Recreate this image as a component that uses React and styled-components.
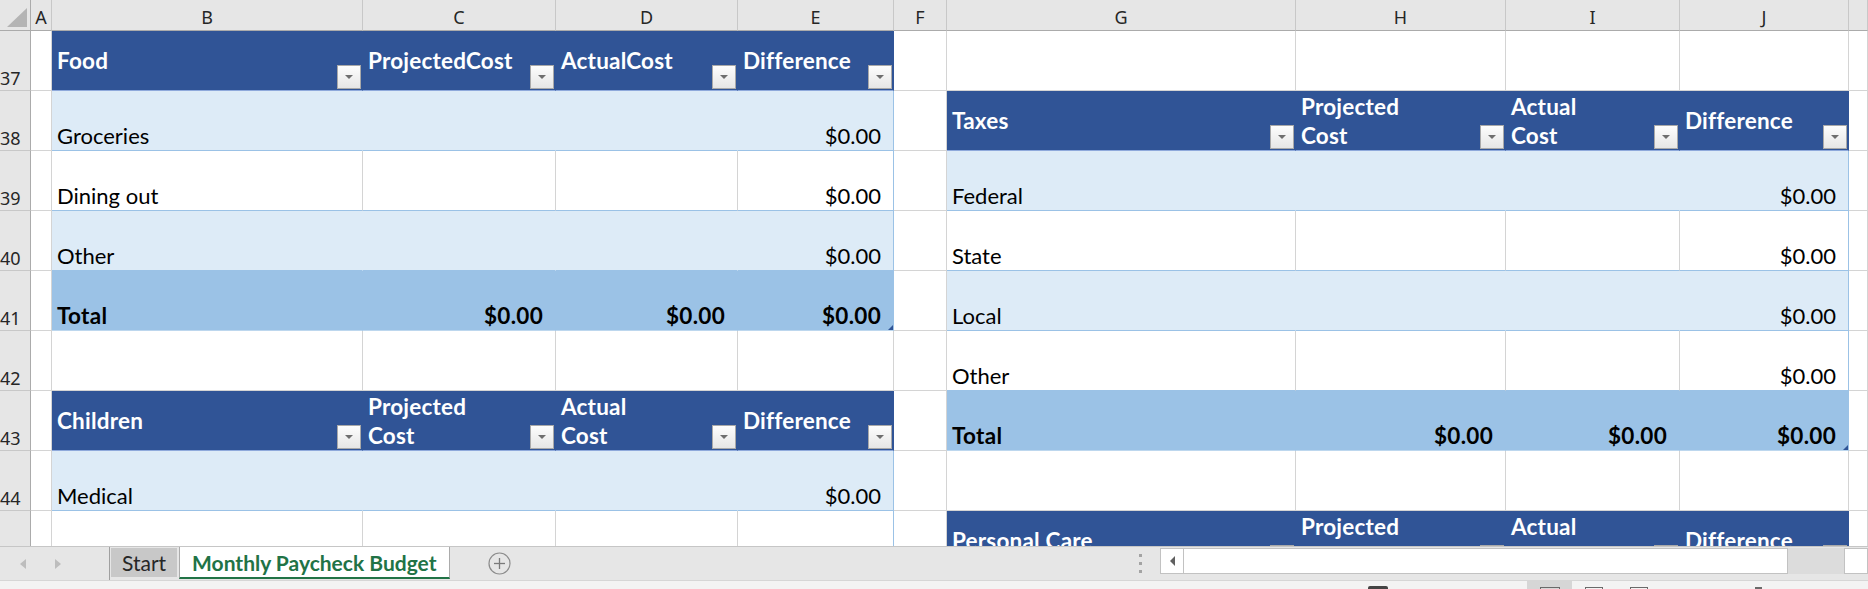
import React from "react";
import styled, { createGlobalStyle } from "styled-components";

const GlobalStyle = createGlobalStyle`
  html, body {
    margin: 0;
    padding: 0;
    background: #fff;
    overflow: hidden;
  }
  body {
    font-family: Lato, "Liberation Sans", sans-serif;
  }
`;

const COLS = [31, 21, 311, 193, 182, 156, 53, 349, 210, 174, 169];
const LETTERS = ["A", "B", "C", "D", "E", "F", "G", "H", "I", "J", ""];

const palette = {
  plain: { bg: "#ffffff", right: "#d4d4d4", bottom: "#d4d4d4" },
  head: { bg: "#305496", right: "#305496", bottom: "#8ea9db" },
  band: { bg: "#ddebf7", right: "#ddebf7", bottom: "#9bc2e6" },
  white: { bg: "#ffffff", right: "#d4d4d4", bottom: "#9bc2e6" },
  total: { bg: "#9bc2e6", right: "#9bc2e6", bottom: "#bdd7ee" },
};

const FOOD_HEAD = ["Food", "ProjectedCost", "ActualCost", "Difference"];
const splitHead = (first) => [first, "Projected\nCost", "Actual\nCost", "Difference"];
const head = (labels) => labels.map((text) => ({ kind: "head", text }));
const line = (kind, label, amounts = ["", "", "$0.00"]) => [
  { kind, text: label },
  ...amounts.map((text) => ({ kind, text, right: true })),
];
const plain4 = [0, 1, 2, 3].map(() => ({ kind: "plain" }));
const totals = ["$0.00", "$0.00", "$0.00"];

const ROWS = [
  { n: 37, left: head(FOOD_HEAD), right: plain4 },
  { n: 38, left: line("band", "Groceries"), right: head(splitHead("Taxes")) },
  { n: 39, left: line("white", "Dining out"), right: line("band", "Federal") },
  { n: 40, left: line("band", "Other"), right: line("white", "State") },
  { n: 41, left: line("total", "Total", totals), right: line("band", "Local") },
  { n: 42, left: plain4, right: line("white", "Other") },
  { n: 43, left: head(splitHead("Children")), right: line("total", "Total", totals) },
  { n: 44, left: line("band", "Medical"), right: plain4 },
  { n: 45, left: line("white", "", ["", "", ""]), right: head(splitHead("Personal Care")) },
];

const Window = styled.div`
  width: 1868px;
  height: 589px;
  display: flex;
  flex-direction: column;
  overflow: hidden;
`;

const Sheet = styled.div`
  height: 546px;
  flex-shrink: 0;
  overflow: hidden;
  display: grid;
  grid-template-columns: ${COLS.map((w) => `${w}px`).join(" ")} 1fr;
  grid-template-rows: 31px repeat(9, 60px);
`;

const Corner = styled.div`
  background: #e6e6e6;
  border-right: 1px solid #ababab;
  border-bottom: 1px solid #ababab;
  box-sizing: border-box;
  display: flex;
  align-items: flex-end;
  justify-content: flex-end;
  padding: 0 3px 3px 0;
`;

const ColHead = styled.div`
  background: #e6e6e6;
  border-right: 1px solid #c8c8c8;
  border-bottom: 1px solid #ababab;
  box-sizing: border-box;
  display: flex;
  align-items: center;
  justify-content: center;
  padding-top: 3px;
  font-family: "Noto Sans", sans-serif;
  font-size: 18px;
  color: #262626;
  overflow: hidden;
`;

const RowHead = styled.div`
  background: #e6e6e6;
  border-right: 1px solid #ababab;
  border-bottom: 1px solid #c8c8c8;
  box-sizing: border-box;
  display: flex;
  align-items: flex-end;
  font-family: "Noto Sans", sans-serif;
  font-size: 18px;
  line-height: 22px;
  color: #262626;
  padding-bottom: 1px;
  overflow: hidden;
`;

const Cell = styled.div`
  position: relative;
  box-sizing: border-box;
  min-width: 0;
  display: flex;
  overflow: hidden;
  background: ${({ $kind }) => palette[$kind].bg};
  border-right: 1px solid
    ${({ $kind, $edge }) => ($edge && $kind !== "head" && $kind !== "plain" ? "#9bc2e6" : palette[$kind].right)};
  border-bottom: 1px solid ${({ $kind }) => palette[$kind].bottom};

  ${({ $handle }) =>
    $handle &&
    `
    &::after {
      content: "";
      position: absolute;
      right: 0;
      bottom: 0;
      width: 5px;
      height: 5px;
      background: #305496;
      clip-path: polygon(100% 0, 100% 100%, 0 100%);
    }
  `}
`;

const HeadText = styled.div`
  flex: 1;
  align-self: center;
  padding-left: 5px;
  color: #fff;
  font-weight: 700;
  font-size: 22.5px;
  letter-spacing: 0.2px;
  line-height: 29px;
  white-space: pre-line;
  overflow: hidden;
`;

const FilterButton = styled.div`
  flex-shrink: 0;
  align-self: flex-end;
  width: 24px;
  height: 24px;
  margin: 0 1px 1px 0;
  box-sizing: border-box;
  border: 1px solid #a9a9a9;
  background: linear-gradient(#fdfdfd, #e6e6e6);
  display: flex;
  align-items: center;
  justify-content: center;
`;

const Value = styled.div`
  flex: 1;
  align-self: flex-end;
  padding: 0 ${({ $right }) => ($right ? "12px" : "5px")} 0 5px;
  text-align: ${({ $right }) => ($right ? "right" : "left")};
  font-size: ${({ $bold }) => ($bold ? "22.5px" : "22px")};
  letter-spacing: ${({ $bold }) => ($bold ? "0.3px" : "0")};
  line-height: 28px;
  font-weight: ${({ $bold }) => ($bold ? 700 : 400)};
  color: #000;
  white-space: nowrap;
`;

const TabBar = styled.div`
  height: 34px;
  flex-shrink: 0;
  box-sizing: border-box;
  border-top: 1px solid #c6c6c6;
  background: #e6e6e6;
  display: flex;
  align-items: flex-start;
`;

const NavArea = styled.div`
  width: 110px;
  height: 33px;
  box-sizing: border-box;
  display: flex;
  align-items: center;
  gap: 29px;
  padding-left: 20px;
  border-right: 1px solid #a0a0a0;
`;

const NavArrow = styled.svg`
  width: 6px;
  height: 10px;
`;

const Tab = styled.div`
  height: ${({ $active }) => ($active ? "32px" : "29px")};
  margin-top: ${({ $active }) => ($active ? "0" : "1px")};
  margin-left: ${({ $active }) => ($active ? "2px" : "1px")};
  box-sizing: border-box;
  padding: 0 ${({ $active }) => ($active ? "12px" : "11px")};
  display: flex;
  align-items: center;
  font-size: 21px;
  font-weight: ${({ $active }) => ($active ? 700 : 400)};
  color: ${({ $active }) => ($active ? "#217346" : "#262626")};
  background: ${({ $active }) => ($active ? "#ffffff" : "#c8c8c8")};
  border-left: ${({ $active }) => ($active ? "1px solid #ababab" : "none")};
  border-right: ${({ $active }) => ($active ? "1px solid #ababab" : "none")};
  border-bottom: ${({ $active }) => ($active ? "2px solid #217346" : "none")};
  white-space: nowrap;
`;

const AddSheet = styled.svg`
  width: 23px;
  height: 23px;
  margin: 5px 0 0 38px;
`;

const Spacer = styled.div`
  flex: 1;
`;

const Dots = styled.div`
  width: 3px;
  margin: 7px 18px 0 0;
  display: flex;
  flex-direction: column;
  gap: 5px;

  span {
    width: 3px;
    height: 3px;
    background: #a3a3a3;
  }
`;

const ScrollBar = styled.div`
  width: 708px;
  height: 26px;
  margin-top: 1px;
  display: flex;
  background: #dcdcdc;
`;

const ScrollButton = styled.div`
  width: 24px;
  box-sizing: border-box;
  border: 1px solid #c2c2c2;
  background: #fff;
  display: flex;
  align-items: center;
  justify-content: center;
  flex-shrink: 0;
`;

const Thumb = styled.div`
  width: 604px;
  box-sizing: border-box;
  border: 1px solid #c2c2c2;
  border-left: none;
  background: #fff;
`;

const Track = styled.div`
  flex: 1;
`;

const StatusBar = styled.div`
  height: 9px;
  flex-shrink: 0;
  box-sizing: border-box;
  border-top: 1px solid #d6d6d6;
  background: #f3f3f3;
  display: flex;
  align-items: flex-start;
  padding-left: 1368px;
`;

const StatusItem = styled.div`
  flex-shrink: 0;
  width: ${({ $w }) => $w}px;
  height: 12px;
  margin-left: ${({ $gap }) => $gap}px;
  margin-top: ${({ $top }) => $top}px;
  box-sizing: border-box;
  background: ${({ $fill }) => $fill || "transparent"};
  border: ${({ $outline }) => ($outline ? "1px solid #6a6a6a" : "none")};
  border-radius: ${({ $round }) => ($round ? "2px" : "0")};
`;

const ViewGroup = styled.div`
  margin-left: 139px;
  width: 45px;
  height: 8px;
  background: #d6d6d6;
  display: flex;
  justify-content: center;
  align-items: flex-start;
`;

const FilterArrow = () => (
  <svg width="8" height="4" viewBox="0 0 8 4">
    <polygon points="0,0 8,0 4,4" fill="#6e6e6e" />
  </svg>
);

const SheetCell = ({ cell, edge }) => {
  if (cell.kind === "head") {
    return (
      <Cell $kind="head" $edge={edge}>
        <HeadText>{cell.text}</HeadText>
        <FilterButton>
          <FilterArrow />
        </FilterButton>
      </Cell>
    );
  }
  return (
    <Cell $kind={cell.kind} $edge={edge} $handle={cell.kind === "total" && edge}>
      <Value $right={cell.right} $bold={cell.kind === "total"}>
        {cell.text}
      </Value>
    </Cell>
  );
};

const SheetRow = ({ row }) => (
  <>
    <RowHead>{row.n}</RowHead>
    <Cell $kind="plain" />
    {row.left.map((cell, i) => (
      <SheetCell key={`l${i}`} cell={cell} edge={i === 3} />
    ))}
    <Cell $kind="plain" />
    {row.right.map((cell, i) => (
      <SheetCell key={`r${i}`} cell={cell} edge={i === 3} />
    ))}
    <Cell $kind="plain" />
  </>
);

const App = () => {
  return (
    <Window>
      <GlobalStyle />
      <Sheet>
        <Corner>
          <svg width="20" height="19" viewBox="0 0 20 19">
            <polygon points="20,0 20,19 0,19" fill="#b4b4b4" />
          </svg>
        </Corner>
        {LETTERS.map((l, i) => (
          <ColHead key={i}>{l}</ColHead>
        ))}
        {ROWS.map((row) => (
          <SheetRow key={row.n} row={row} />
        ))}
      </Sheet>

      <TabBar>
        <NavArea>
          <NavArrow viewBox="0 0 6 10">
            <polygon points="6,0 6,10 0,5" fill="#bdbdbd" />
          </NavArrow>
          <NavArrow viewBox="0 0 6 10">
            <polygon points="0,0 0,10 6,5" fill="#bdbdbd" />
          </NavArrow>
        </NavArea>
        <Tab>Start</Tab>
        <Tab $active>Monthly Paycheck Budget</Tab>
        <AddSheet viewBox="0 0 23 23">
          <circle cx="11.5" cy="11.5" r="10.5" fill="none" stroke="#8c8c8c" strokeWidth="1.2" />
          <line x1="11.5" y1="6" x2="11.5" y2="17" stroke="#7a7a7a" strokeWidth="1.3" />
          <line x1="6" y1="11.5" x2="17" y2="11.5" stroke="#7a7a7a" strokeWidth="1.3" />
        </AddSheet>
        <Spacer />
        <Dots>
          <span />
          <span />
          <span />
        </Dots>
        <ScrollBar>
          <ScrollButton>
            <svg width="5" height="10" viewBox="0 0 5 10">
              <polygon points="5,0 5,10 0,5" fill="#606060" />
            </svg>
          </ScrollButton>
          <Thumb />
          <Track />
          <ScrollButton />
        </ScrollBar>
      </TabBar>

      <StatusBar>
        <StatusItem $w={20} $gap={0} $top={5} $fill="#444" $round />
        <ViewGroup>
          <StatusItem $w={20} $gap={0} $top={6} $outline />
        </ViewGroup>
        <StatusItem $w={18} $gap={13} $top={6} $outline />
        <StatusItem $w={18} $gap={27} $top={6} $outline />
        <StatusItem $w={7} $gap={107} $top={6} $fill="#6a6a6a" />
      </StatusBar>
    </Window>
  );
};

export default App;
